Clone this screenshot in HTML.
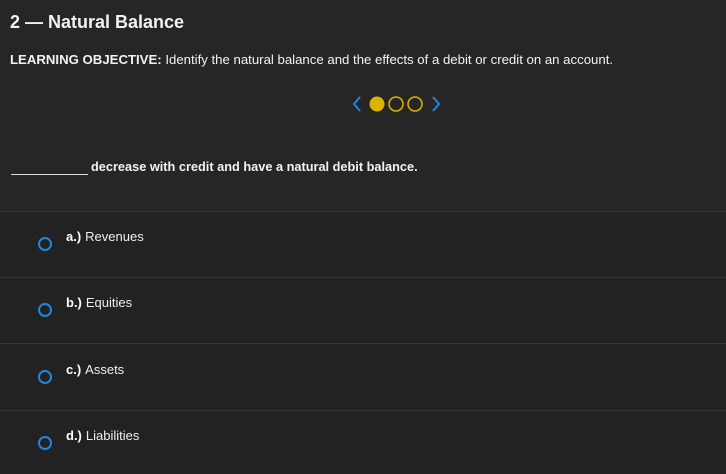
<!DOCTYPE html>
<html><head><style>
body{margin:0;width:726px;height:474px;overflow:hidden;background:#222;font-family:"Liberation Sans",Arial,sans-serif;color:#fff;position:relative}
.top{position:absolute;left:0;top:0;width:726px;height:211px;background:#262626}
.sep{position:absolute;left:0;width:726px;height:1px;background:#363636}
.t{position:absolute;white-space:nowrap}
.r{position:absolute;left:38px;width:10px;height:10px;border:2px solid #1f86e0;border-radius:50%}
.o{position:absolute;left:66px;font-size:13px;color:#eee;white-space:nowrap}
.o b{font-weight:bold;color:#fff;margin-right:4px}
</style></head><body>
<div class="top"></div>
<div class="t" style="left:10px;top:12px;font-size:18px;font-weight:bold;color:#f2f2f2">2 — Natural Balance</div>
<div class="t" style="left:10px;top:52px;font-size:13.2px;color:#f2f2f2"><b>LEARNING OBJECTIVE:</b> Identify the natural balance and the effects of a debit or credit on an account.</div>
<svg style="position:absolute;left:350px;top:94px" width="94" height="20">
<path d="M10 3 L4 10 L10 17" stroke="#1f86e0" stroke-width="2" fill="none"/>
<circle cx="27" cy="10" r="7.5" fill="#dcb400"/>
<circle cx="46" cy="10" r="7" stroke="#dcb400" stroke-width="1.5" fill="none"/>
<circle cx="65" cy="10" r="7" stroke="#dcb400" stroke-width="1.5" fill="none"/>
<path d="M83 3 L89 10 L83 17" stroke="#1f86e0" stroke-width="2" fill="none"/>
</svg>
<div style="position:absolute;left:11px;top:174px;width:77px;height:1px;background:#ddd"></div>
<div class="t" style="left:91px;top:159px;font-size:12.75px;font-weight:bold;color:#f2f2f2">decrease with credit and have a natural debit balance.</div>
<div class="sep" style="top:211px"></div>
<div class="sep" style="top:277px"></div>
<div class="sep" style="top:343px"></div>
<div class="sep" style="top:410px"></div>
<div class="r" style="top:237px"></div><div class="o" style="top:229px"><b>a.)</b>Revenues</div>
<div class="r" style="top:303px"></div><div class="o" style="top:295px"><b>b.)</b>Equities</div>
<div class="r" style="top:370px"></div><div class="o" style="top:362px"><b>c.)</b>Assets</div>
<div class="r" style="top:436px"></div><div class="o" style="top:428px"><b>d.)</b>Liabilities</div>
</body></html>
